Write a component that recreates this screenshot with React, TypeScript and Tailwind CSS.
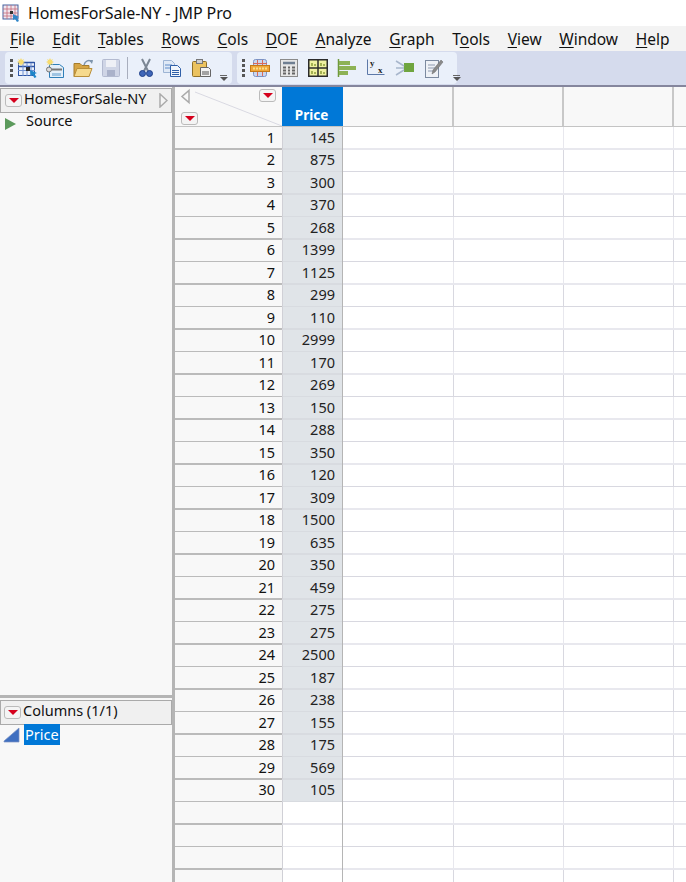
import type { ReactNode } from 'react'

const prices = [
  145, 875, 300, 370, 268, 1399, 1125, 299, 110, 2999, 170, 269, 150, 288, 350,
  120, 309, 1500, 635, 350, 459, 275, 275, 2500, 187, 238, 155, 175, 569, 105,
]
const rows = Array.from({ length: 35 }, (_, i) => i + 1)

const menus: [string, string, string][] = [
  ['', 'F', 'ile'],
  ['', 'E', 'dit'],
  ['', 'T', 'ables'],
  ['', 'R', 'ows'],
  ['', 'C', 'ols'],
  ['', 'D', 'OE'],
  ['', 'A', 'nalyze'],
  ['', 'G', 'raph'],
  ['T', 'o', 'ols'],
  ['', 'V', 'iew'],
  ['', 'W', 'indow'],
  ['', 'H', 'elp'],
]

const Ico = ({ children, w = 20 }: { children: ReactNode; w?: number }) => (
  <svg width={w} height="20" viewBox={`0 0 ${w} 20`} className="shrink-0">
    {children}
  </svg>
)

const Grip = () => (
  <div className="flex w-[3px] flex-col gap-[2px]">
    <span className="h-[3px] w-[3px] bg-[#555]" />
    <span className="h-[3px] w-[3px] bg-[#555]" />
    <span className="h-[3px] w-[3px] bg-[#555]" />
    <span className="h-[3px] w-[3px] bg-[#555]" />
  </div>
)

const Overflow = () => (
  <div className="flex w-[9px] flex-col items-center gap-[1px] pb-[3px]">
    <span className="h-[1px] w-[7px] bg-[#666]" />
    <span className="h-0 w-0 border-x-[4px] border-t-[4px] border-x-transparent border-t-[#555]" />
  </div>
)

const RedMenu = () => (
  <span className="flex h-[13px] w-[17px] items-center justify-center rounded-[3px] border border-[#bbb] bg-[#f4f4f4]">
    <span className="h-0 w-0 border-x-[5px] border-t-[5px] border-x-transparent border-t-[#d5001c]" />
  </span>
)

const Star = ({ x = 0, y = 0 }: { x?: number; y?: number }) => (
  <path
    transform={`translate(${x} ${y})`}
    d="M4 0l1 2 2-1-1 2 2 1-2 1 1 2-2-1-1 2-1-2-2 1 1-2-2-1 2-1-1-2 2 1z"
    fill="#f7dc6f"
  />
)

const TableIcon = () => (
  <Ico>
    <rect x="1.500" y="4.500" width="16" height="13" fill="#eaf0fb" stroke="#2f55a4" />
    <path d="M1.500 4.500h16M1.500 8.500h16" stroke="#2f55a4" strokeWidth="1.500" />
    <path d="M1 12.500h17M6 5v13M10 5v13M14 5v13" stroke="#6f8fd0" />
    <rect x="9" y="9" width="4" height="4" fill="#2b2b2b" />
    <path d="M13 12l7 3-2.500 1 2 3-2 1-2-3-2 1z" fill="#1f86c9" />
    <Star x={0} y={0} />
  </Ico>
)

const ScriptIcon = () => (
  <Ico>
    <path d="M4.500 6.500h10l4 3v10h-14z" fill="#e4eff9" stroke="#2f7fb8" />
    <path d="M3 11.500h14" stroke="#777" strokeWidth="2" />
    <circle cx="4" cy="11.500" r="2.500" fill="#ddd" stroke="#777" />
    <path d="M7 15h9v3H7z" fill="#9fc4e2" />
    <Star x={1} y={0} />
  </Ico>
)

const FolderIcon = () => (
  <Ico>
    <path d="M1 5.500h6l2 2h7v11H1z" fill="#d6a545" stroke="#a67c2b" />
    <path d="M1 18.500l3-8h15l-3 8z" fill="#f6da8d" stroke="#b98f3a" />
    <path d="M11 7c1-4 5-6 8-3" fill="none" stroke="#7d94ad" strokeWidth="1.500" />
    <path d="M16 2l4 0-1 4z" fill="#7d94ad" />
  </Ico>
)

const SaveIcon = () => (
  <Ico>
    <rect x="1.500" y="1.500" width="17" height="17" rx="1" fill="#cfd5e6" stroke="#b3bad0" />
    <rect x="5" y="2" width="10" height="7" fill="#eef0f6" />
    <rect x="6" y="12" width="8" height="6" fill="#aab2ca" />
  </Ico>
)

const CutIcon = () => (
  <Ico w={14}>
    <path d="M3 1l6 12M11 1L5 13" stroke="#7c8794" strokeWidth="2" />
    <circle cx="3.500" cy="15.500" r="3" fill="#3f66b8" stroke="#1f3f88" />
    <circle cx="10.500" cy="15.500" r="3" fill="#3f66b8" stroke="#1f3f88" />
  </Ico>
)

const CopyIcon = () => (
  <Ico>
    <path d="M1.500 2.500h8l3 3v9h-11z" fill="#dfe9f6" stroke="#9db4d4" />
    <path d="M3 7h7M3 10h7" stroke="#5f8cc9" />
    <path d="M8.500 7.500h7l3 3v8h-10z" fill="#f0f5fc" stroke="#2f5fa8" />
    <path d="M10 12.500h7M10 14.500h7M10 16.500h7" stroke="#2f5fa8" />
  </Ico>
)

const PasteIcon = () => (
  <Ico>
    <rect x="1.500" y="3.500" width="14" height="15" rx="1" fill="#ebc25f" stroke="#8f7028" />
    <rect x="5.500" y="1.500" width="6" height="4" fill="#cfcfcf" stroke="#777" />
    <path d="M9.500 9.500h8l2 2v7h-10z" fill="#f2f2f2" stroke="#666" />
    <path d="M11 14h7M11 16h7" stroke="#555" />
  </Ico>
)

const DataIcon = () => (
  <Ico>
    <rect x="3.500" y="1.500" width="13" height="17" rx="2" fill="#c9d6ef" stroke="#7d93c4" />
    <path d="M3 5.500h14M7.500 2v16M12.500 2v16" stroke="#d96a5c" />
    <rect x="0.500" y="7.500" width="19" height="6" fill="#f0a63a" stroke="#c47a18" />
    <path d="M3 10.500h14" stroke="#f7e08a" strokeWidth="2" strokeDasharray="2 1" />
  </Ico>
)

const CalcIcon = () => (
  <Ico>
    <rect x="1.500" y="1.500" width="17" height="17" fill="#e6e6e6" stroke="#8a8a8a" />
    <path d="M4 5h12" stroke="#6f7f92" strokeWidth="2.500" />
    <path d="M4 9.500h3M9 9.500h2M13 9.500h3M4 12.500h3M9 12.500h2M13 12.500h3M4 15.500h3M9 15.500h2M13 15.500h3" stroke="#666" strokeWidth="2" />
  </Ico>
)

const QuadIcon = () => (
  <Ico>
    <rect x="0.750" y="1.750" width="18.500" height="16.500" fill="#eef0a0" stroke="#2b2b2b" strokeWidth="1.500" />
    <path d="M10 2v16M1 10h18" stroke="#2b2b2b" strokeWidth="1.500" />
    <path d="M4 5v3M7 6v2M13 5v3M16 6v2M4 13v3M7 14v2M13 13v3M16 14v2" stroke="#8a9c3a" strokeWidth="1.500" />
  </Ico>
)

const BarsIcon = () => (
  <Ico>
    <path d="M1.500 1v18" stroke="#6f9a3c" strokeWidth="1.500" />
    <rect x="2" y="3" width="11" height="4" fill="#8db255" />
    <rect x="2" y="8" width="17" height="4" fill="#8db255" />
    <rect x="2" y="13" width="9" height="4" fill="#8db255" />
  </Ico>
)

const AxesIcon = () => (
  <Ico>
    <path d="M1.500 1.500v15h17" fill="none" stroke="#5c78a8" />
    <text x="4" y="8" fontSize="9" fontWeight="700" fill="#222" fontFamily="'Liberation Serif', serif">y</text>
    <text x="12" y="15" fontSize="9" fontWeight="700" fill="#222" fontFamily="'Liberation Serif', serif">x</text>
  </Ico>
)

const FlowIcon = () => (
  <Ico>
    <rect x="9" y="5" width="10" height="9" fill="#6fa53f" />
    <path d="M1 3l8 5M1 10h8M1 17l8-5" stroke="#a8b6cc" strokeWidth="1.500" />
  </Ico>
)

const NoteIcon = () => (
  <Ico>
    <rect x="1.500" y="2.500" width="13" height="17" fill="#eef1f6" stroke="#7c8aa0" />
    <path d="M4 7h7M4 10h7M4 13h5" stroke="#8f9bb0" />
    <path d="M8 16l1-4 8-10 2 2-8 10z" fill="#8a8a8a" stroke="#666" strokeWidth=".5" />
  </Ico>
)

const App = () => {
  return (
    <div className="flex h-[882px] w-[686px] flex-col overflow-hidden bg-white font-['Noto_Sans',sans-serif] text-[14.5px] text-[#111]">
      {/* title bar */}
      <div className="flex h-[26px] shrink-0 items-center gap-[8px] pl-[2px]">
        <svg width="18" height="18" viewBox="0 0 18 18" className="shrink-0">
          <rect x="1" y="1" width="15" height="14" fill="#f0e6ee" stroke="#46639f" />
          <path d="M1 5h15M1 9h15M1 12h15M5 1v14M9 1v14M13 1v14" stroke="#c46a7a" strokeWidth=".8" />
          <rect x="8" y="7" width="3" height="3" fill="#333" />
          <path d="M11 10l6 3-2 1 2 3-2 1-2-3-2 1z" fill="#2f86c8" />
        </svg>
        <span className="text-[16px] tracking-[-0.12px]">HomesForSale-NY - JMP Pro</span>
      </div>

      {/* menu */}
      <div className="flex h-[25px] shrink-0 items-center gap-[17.7px] bg-[#f3f3f3] pl-[10px] pt-[2px] text-[15.5px]">
        {menus.map(([pre, key, rest]) => (
          <span key={key + rest}>
            {pre}
            <span className="underline underline-offset-2">{key}</span>
            {rest}
          </span>
        ))}
      </div>

      {/* toolbar */}
      <div className="flex h-[36px] shrink-0 gap-[5px] border-b-2 border-[#85869d] bg-[#d5dbed] py-[1px] pl-[5px]">
        <div className="flex w-[227px] items-center rounded-[4px] bg-[#eaf0fa] pl-[5px]">
          <Grip />
          <div className="ml-[4px] flex items-center gap-[8px]">
            <TableIcon />
            <ScriptIcon />
            <FolderIcon />
            <SaveIcon />
          </div>
          <span className="ml-[6px] h-[22px] w-[1px] bg-[#a8aebd]" />
          <div className="ml-[11px] flex items-center gap-[9px]">
            <CutIcon />
            <CopyIcon />
            <PasteIcon />
          </div>
          <div className="ml-[8px] flex h-full items-end">
            <Overflow />
          </div>
        </div>
        <div className="flex w-[220px] items-center rounded-[4px] bg-[#eaf0fa] pl-[5px]">
          <Grip />
          <div className="ml-[5px] flex items-center gap-[9px]">
            <DataIcon />
            <CalcIcon />
            <QuadIcon />
            <BarsIcon />
            <AxesIcon />
            <FlowIcon />
            <NoteIcon />
          </div>
          <div className="ml-[8px] flex h-full items-end">
            <Overflow />
          </div>
        </div>
      </div>

      <div className="flex min-h-0 flex-1">
        {/* left panels */}
        <div className="flex w-[172px] shrink-0 flex-col bg-[#f8f8f8]">
          <div className="h-[608px] shrink-0 pt-[1px]">
            <div className="flex h-[25px] items-center justify-between border border-[#aaa] bg-[#f0f0f0] pl-[4px] pr-[3px]">
              <div className="flex items-center gap-[2px]">
                <RedMenu />
                <span className="pb-[3px]">HomesForSale-NY</span>
              </div>
              <svg width="9" height="15" viewBox="0 0 9 15" className="shrink-0">
                <path d="M1 1l7 6.500-7 6.500z" fill="#f4f4f4" stroke="#aaa" strokeWidth="1.500" />
              </svg>
            </div>
            <div className="flex h-[19px] items-center gap-[10px] pl-[5px]">
              <span className="mt-[3px] h-0 w-0 border-y-[6px] border-l-[11px] border-y-transparent border-l-[#5c9a5c]" />
              <span className="pb-[3px]">Source</span>
            </div>
          </div>
          <div className="h-[3px] shrink-0 bg-[#b5b5b5]" />
          <div className="flex-1 pt-[2px]">
            <div className="flex h-[25px] items-center gap-[2px] border border-[#aaa] bg-[#f0f0f0] pl-[3px]">
              <RedMenu />
              <span className="pb-[3px]">Columns (1/1)</span>
            </div>
            <div className="flex h-[19px] items-center gap-[3px] pl-[3px]">
              <svg width="18" height="16" viewBox="0 0 18 16" className="shrink-0">
                <path d="M1 14L16 1v14H1z" fill="#3f6fc0" stroke="#7d93c4" strokeWidth=".7" />
              </svg>
              <span className="bg-[#0078d7] px-[1px] text-white">Price</span>
            </div>
          </div>
        </div>
        <div className="w-[3px] shrink-0 bg-[#b5b5b5]" />

        {/* data table */}
        <div className="min-w-0 flex-1">
          <div className="flex h-[40px] border-b border-[#c4c4c4] bg-[#f8f8f8]">
            <div className="relative h-full w-[107px] shrink-0">
              <svg width="107" height="39" viewBox="0 0 107 39" className="absolute left-0 top-0">
                <path d="M20 5l87 34" stroke="#d9d9e2" />
                <path d="M14 3.500v12L7 9.500z" fill="#f8f8f8" stroke="#aaa" strokeWidth="1.500" />
              </svg>
              <span className="absolute right-[6px] top-[2px]"><RedMenu /></span>
              <span className="absolute left-[6px] bottom-[1px]"><RedMenu /></span>
            </div>
            <div className="flex w-[61px] shrink-0 items-end justify-center bg-[#0078d7] pb-[1px] pr-[2px] text-[13.5px] font-bold text-white">
              Price
            </div>
            <div className="w-[111px] shrink-0 border-r-2 border-[#c8c8c8]" />
            <div className="w-[110px] shrink-0 border-r-2 border-[#c8c8c8]" />
            <div className="w-[110px] shrink-0 border-r-2 border-[#c8c8c8]" />
          </div>
          {rows.map((row) => {
            const odd = row % 2 === 1
            return (
              <div key={row} className={odd ? 'flex h-[23px]' : 'flex h-[22px]'}>
                <div
                  className={
                    odd
                      ? 'w-[107px] shrink-0 border-b-2 border-[#bbb] bg-[#f8f8f8] pr-[7px] text-right leading-[20px]'
                      : 'w-[107px] shrink-0 border-b border-[#bbb] bg-[#f8f8f8] pr-[7px] text-right leading-[19px]'
                  }
                >
                  {row <= 30 ? row : ''}
                </div>
                <div
                  className={
                    (odd ? 'border-b-2 ' : 'border-b ') +
                    (row <= 30
                      ? 'w-[60px] shrink-0 border-l border-l-[#d0d0d6] border-b-[#d8dbe0] bg-[#e0e4e8] pr-[7px] text-right ' +
                        (odd ? 'leading-[20px]' : 'leading-[19px]') +
                        ' text-[#222]'
                      : 'w-[60px] shrink-0 border-l border-l-[#d0d0d6] border-b-[#e4e4ea] bg-white')
                  }
                >
                  {prices[row - 1]}
                </div>
                <div className="w-[1px] shrink-0 bg-[#b5b5b5]" />
                <div className={odd ? 'w-[111px] shrink-0 border-b-2 border-r border-[#e8e8ee]' : 'w-[111px] shrink-0 border-b border-r border-[#d8d8e0]'} />
                <div className={odd ? 'w-[110px] shrink-0 border-b-2 border-r border-[#e8e8ee]' : 'w-[110px] shrink-0 border-b border-r border-[#d8d8e0]'} />
                <div className={odd ? 'w-[110px] shrink-0 border-b-2 border-r border-[#e8e8ee]' : 'w-[110px] shrink-0 border-b border-r border-[#d8d8e0]'} />
                <div className={odd ? 'flex-1 border-b-2 border-[#e8e8ee]' : 'flex-1 border-b border-[#d8d8e0]'} />
              </div>
            )
          })}
        </div>
      </div>
    </div>
  )
}

export default App
